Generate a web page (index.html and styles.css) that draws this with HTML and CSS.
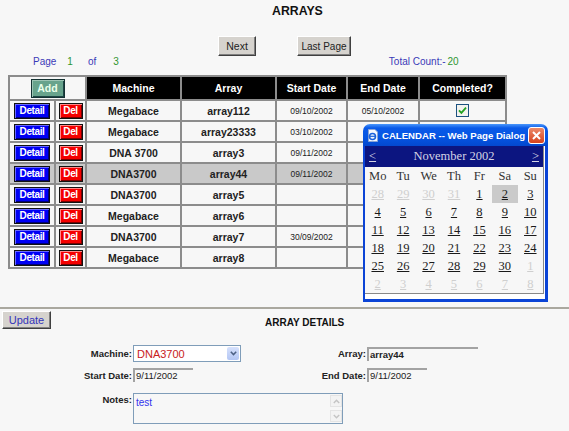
FILE: index.html
```html
<!DOCTYPE html>
<html lang="en">
<head>
    <meta charset="UTF-8">
    <meta name="viewport" content="width=device-width, initial-scale=1.0">
    <title>Arrays</title>
    <link rel="stylesheet" href="styles.css">
</head>
<body>
    <h2 class="title">ARRAYS</h2>

    <div class="nav">
        <button class="btn btn-next">Next</button>
        <button class="btn btn-last">Last Page</button>
    </div>

    <div class="counts">
        <span class="lbl-blue">Page</span>
        <span class="num n-page">1</span>
        <span class="lbl-blue n-of">of</span>
        <span class="num n-pages">3</span>
        <span class="lbl-blue n-total">Total Count:-</span>
        <span class="num n-count">20</span>
    </div>

    <table class="grid">
        <colgroup>
            <col class="c-det"><col class="c-del"><col class="c-mach"><col class="c-arr">
            <col class="c-start"><col class="c-end"><col class="c-done">
        </colgroup>
        <tr class="head">
            <th colspan="2" class="add-cell"><button class="add">Add</button></th>
            <th>Machine</th>
            <th>Array</th>
            <th>Start Date</th>
            <th>End Date</th>
            <th>Completed?</th>
        </tr>
        <tr>
            <td><button class="detail">Detail</button></td>
            <td><button class="del">Del</button></td>
            <td>Megabace</td>
            <td>array112</td>
            <td class="date">09/10/2002</td>
            <td class="date">05/10/2002</td>
            <td>
                <svg class="check" width="13" height="13" viewBox="0 0 13 13">
                    <rect x="0.5" y="0.5" width="12" height="12" fill="#f2f2ee" stroke="#1c5180"/>
                    <path d="M3 6.3 L5.4 8.8 L10 3.6" fill="none" stroke="#21a121" stroke-width="1.8"/>
                </svg>
            </td>
        </tr>
        <tr>
            <td><button class="detail">Detail</button></td>
            <td><button class="del">Del</button></td>
            <td>Megabace</td>
            <td>array23333</td>
            <td class="date">03/10/2002</td>
            <td class="date under">10/10/2002</td>
            <td></td>
        </tr>
        <tr>
            <td><button class="detail">Detail</button></td>
            <td><button class="del">Del</button></td>
            <td>DNA 3700</td>
            <td>array3</td>
            <td class="date">09/11/2002</td>
            <td class="date"></td>
            <td></td>
        </tr>
        <tr class="picked">
            <td><button class="detail">Detail</button></td>
            <td><button class="del">Del</button></td>
            <td>DNA3700</td>
            <td>array44</td>
            <td class="date">09/11/2002</td>
            <td class="date"></td>
            <td></td>
        </tr>
        <tr>
            <td><button class="detail">Detail</button></td>
            <td><button class="del">Del</button></td>
            <td>DNA3700</td>
            <td>array5</td>
            <td class="date"></td>
            <td class="date"></td>
            <td></td>
        </tr>
        <tr>
            <td><button class="detail">Detail</button></td>
            <td><button class="del">Del</button></td>
            <td>Megabace</td>
            <td>array6</td>
            <td class="date"></td>
            <td class="date"></td>
            <td></td>
        </tr>
        <tr>
            <td><button class="detail">Detail</button></td>
            <td><button class="del">Del</button></td>
            <td>DNA3700</td>
            <td>array7</td>
            <td class="date">30/09/2002</td>
            <td class="date"></td>
            <td></td>
        </tr>
        <tr>
            <td><button class="detail">Detail</button></td>
            <td><button class="del">Del</button></td>
            <td>Megabace</td>
            <td>array8</td>
            <td class="date"></td>
            <td class="date"></td>
            <td></td>
        </tr>
    </table>

    <div class="sep"></div>

    <div class="details-head">
        <button class="btn btn-update">Update</button>
        <span class="details-title">ARRAY DETAILS</span>
    </div>

    <div class="form">
        <div class="frow">
            <label class="flbl">Machine:</label>
            <div class="select fld">
                <span class="select-val">DNA3700</span>
                <span class="select-btn">
                    <svg width="7" height="5" viewBox="0 0 7 5"><path d="M0.8 0.8 L3.5 3.6 L6.2 0.8" fill="none" stroke="#4d6185" stroke-width="1.5"/></svg>
                </span>
            </div>
            <label class="flbl">Array:</label>
            <div class="inp fld w111 inp-bold">array44</div>
        </div>
        <div class="frow frow-2">
            <label class="flbl">Start Date:</label>
            <div class="inp fld w60">9/11/2002</div>
            <label class="flbl">End Date:</label>
            <div class="inp fld w60">9/11/2002</div>
        </div>
        <div class="frow frow-3">
            <label class="flbl flbl-top">Notes:</label>
            <div class="notes fld">
                <span class="notes-text">test</span>
                <div class="sb">
                    <span class="sb-btn">
                        <svg width="7" height="5" viewBox="0 0 7 5"><path d="M0.8 4 L3.5 1.2 L6.2 4" fill="none" stroke="#c4c4c4" stroke-width="1.4"/></svg>
                    </span>
                    <span class="sb-btn">
                        <svg width="7" height="5" viewBox="0 0 7 5"><path d="M0.8 1 L3.5 3.8 L6.2 1" fill="none" stroke="#c4c4c4" stroke-width="1.4"/></svg>
                    </span>
                </div>
            </div>
        </div>
    </div>

    <!-- calendar popup floats over the table -->
    <div class="dialog">
        <div class="dlg-title">
            <svg class="dlg-icon" width="12" height="13" viewBox="0 0 12 13">
                <path d="M1.5 0.5 H8 L10.5 3 V12.5 H1.5 Z" fill="#f4f8ff" stroke="#8aa4d4"/>
                <circle cx="5.5" cy="7.5" r="3" fill="none" stroke="#1a62dc" stroke-width="1.6"/>
                <path d="M2.6 7.3 H8.4" stroke="#1a62dc" stroke-width="1.2"/>
            </svg>
            <span class="dlg-text">CALENDAR -- Web Page Dialog</span>
            <span class="dlg-close">
                <svg width="9" height="9" viewBox="0 0 9 9"><path d="M1 1 L8 8 M8 1 L1 8" stroke="#fff" stroke-width="2"/></svg>
            </span>
        </div>
        <div class="dlg-body">
            <div class="cal">
                <div class="cal-head">
                    <a class="cal-arrow">&lt;</a>
                    <span class="cal-month">November 2002</span>
                    <a class="cal-arrow">&gt;</a>
                </div>
                <div class="cal-grid">
                    <span>Mo</span><span>Tu</span><span>We</span><span>Th</span><span>Fr</span><span>Sa</span><span>Su</span>
                    <a class="off">28</a><a class="off">29</a><a class="off">30</a><a class="off">31</a><a>1</a><a class="sel">2</a><a>3</a>
                    <a>4</a><a>5</a><a>6</a><a>7</a><a>8</a><a>9</a><a>10</a>
                    <a>11</a><a>12</a><a>13</a><a>14</a><a>15</a><a>16</a><a>17</a>
                    <a>18</a><a>19</a><a>20</a><a>21</a><a>22</a><a>23</a><a>24</a>
                    <a>25</a><a>26</a><a>27</a><a>28</a><a>29</a><a>30</a><a class="off">1</a>
                    <a class="off">2</a><a class="off">3</a><a class="off">4</a><a class="off">5</a><a class="off">6</a><a class="off">7</a><a class="off">8</a>
                </div>
            </div>
        </div>
    </div>
</body>
</html>
```

FILE: styles.css
```css
body {
    margin: 0;
    background-color: #f7f7f7;
    font-family: "Liberation Sans", Arial, sans-serif;
    color: #111;
    position: relative;
    height: 431px;
    overflow: hidden;
}
.title {
    margin: 0;
    padding: 4px 0 0 272px;
    font-size: 12.3px;
    line-height: 14px;
    font-weight: bold;
}
.nav {
    display: flex;
    gap: 41px;
    padding-left: 218px;
    margin-top: 18px;
}
.btn {
    box-sizing: border-box;
    height: 20px;
    padding: 0;
    background-color: #d6d3ce;
    border: 1px solid;
    border-color: #fff #404040 #404040 #fff;
    box-shadow: inset -1px -1px #808080;
    font-family: inherit;
    font-size: 10px;
    color: #222;
}
.btn-next {
    width: 38px;
    font-size: 10.5px;
}
.btn-last {
    width: 54px;
}
.counts {
    display: flex;
    padding-left: 33px;
    margin-top: 1px;
    height: 10px;
    font-size: 10px;
    line-height: 10px;
}
.lbl-blue {
    color: #3a3ab8;
}
.num {
    color: #2f962f;
}
.n-page { margin-left: 11px; }
.n-of { margin-left: 15px; }
.n-pages { margin-left: 17px; }
.n-total { margin-left: 270px; }
.n-count { margin-left: 2px; }

/* table */
.grid {
    border-collapse: collapse;
    table-layout: fixed;
    width: 497px;
    margin: 8px 0 0 8px;
}
.c-det { width: 46px; }
.c-del { width: 31px; }
.c-mach { width: 95px; }
.c-arr { width: 95px; }
.c-start { width: 71px; }
.c-end { width: 72px; }
.c-done { width: 87px; }
.grid th, .grid td {
    border: 2px solid #8c8c8c;
    padding: 0;
    text-align: center;
    font-size: 10.5px;
    font-weight: bold;
    color: #222;
    height: 19px;
    background-color: #f7f7f7;
}
.grid th {
    height: 22px;
    background-color: #000;
    color: #fff;
}
.grid th.add-cell {
    background-color: #f7f7f7;
}
.grid td.date {
    font-size: 8.5px;
    font-weight: normal;
}
/* this cell sits under the calendar popup */
.grid td.under {
    text-align: left;
    padding-left: 15px;
    white-space: nowrap;
    overflow: hidden;
}
.grid tr.picked td {
    background-color: #c9c9c9;
}
.check {
    display: block;
    margin: 0 auto;
}
.add {
    width: 34px;
    height: 19px;
    padding: 0;
    border: 1px solid #143232;
    box-shadow: inset 1px 1px #9cc4b4, inset -1px -1px #1f4646;
    background-color: #3d7d74;
    background-image: radial-gradient(#7fb89a 0.6px, transparent 0.9px);
    background-size: 2px 2px;
    color: #eaffea;
    font-family: inherit;
    font-size: 10.5px;
    font-weight: bold;
    display: block;
    margin: 0 auto;
}
.detail, .del {
    height: 16px;
    padding: 0;
    display: block;
    margin: 0 auto;
    border: 1px solid #111;
    color: #fff;
    font-family: inherit;
    font-size: 10px;
    font-weight: bold;
    letter-spacing: -0.4px;
}
.detail {
    width: 36px;
    background-color: #0000f4;
    box-shadow: inset 1px 1px #6a6aff, inset -1px -1px #00007a;
}
.del {
    width: 24px;
    background-color: #f40000;
    box-shadow: inset 1px 1px #ff8a8a, inset -1px -1px #7a0000;
}

/* details form */
.sep {
    margin-top: 38px;
    border-top: 2px solid #aaa89f;
}
.details-head {
    display: flex;
    align-items: flex-start;
    height: 18px;
    margin-top: 2px;
    padding-left: 2px;
}
.btn-update {
    width: 49px;
    height: 18px;
    font-size: 11px;
    color: #3333bb;
}
.details-title {
    margin-left: 214px;
    margin-top: 7px;
    font-size: 10px;
    line-height: 10px;
    font-weight: bold;
}
.form {
    margin-top: 16px;
}
.frow {
    display: grid;
    grid-template-columns: 132px 168px 66px 1fr;
    align-items: center;
}
.frow-2 {
    margin-top: 6px;
}
.frow-3 {
    margin-top: 11px;
}
.flbl {
    text-align: right;
    font-size: 9.5px;
    font-weight: bold;
    color: #222;
}
.flbl-top {
    align-self: start;
    margin-top: 1px;
}
.fld {
    margin-left: 1px;
}
.select {
    width: 108px;
    height: 17px;
    box-sizing: border-box;
    border: 1px solid #7f9db9;
    background-color: #fff;
    display: flex;
    align-items: center;
    justify-content: space-between;
}
.select-val {
    margin-left: 3px;
    color: #c8201c;
    font-size: 11px;
}
.select-btn {
    width: 12px;
    height: 13px;
    margin-right: 1px;
    border-radius: 2px;
    background: linear-gradient(#d6e1fc, #b3c6f4);
    display: flex;
    align-items: center;
    justify-content: center;
}
.inp {
    box-sizing: border-box;
    height: 14px;
    border-top: 2px solid #a3a3a3;
    border-left: 2px solid #a3a3a3;
    padding-left: 1px;
    font-size: 9.5px;
    line-height: 12px;
    color: #222;
}
.w60 { width: 60px; }
.w111 { width: 111px; }
.inp-bold { font-weight: bold; }
.notes {
    grid-column: 2 / 4;
    width: 210px;
    height: 31px;
    box-sizing: border-box;
    border: 1px solid #7f9db9;
    display: flex;
}
.notes-text {
    flex: 1;
    padding: 3px 2px;
    font-size: 10px;
    color: #3333ee;
}
.sb {
    width: 12px;
    display: flex;
    flex-direction: column;
    justify-content: space-between;
    padding: 1px 0;
}
.sb-btn {
    height: 12px;
    box-sizing: border-box;
    border: 1px solid #e4e4e4;
    background-color: #f3f3f3;
    display: flex;
    align-items: center;
    justify-content: center;
}

/* calendar dialog */
.dialog {
    position: absolute;
    left: 363px;
    top: 124px;
    width: 185px;
}
.dlg-title {
    height: 22px;
    border-radius: 7px 7px 0 0;
    background: linear-gradient(#4a97fb, #0a5ae8 4px, #0556e4 55%, #0348cf);
    display: flex;
    align-items: center;
    padding: 0 3px 0 4px;
}
.dlg-text {
    margin-left: 3px;
    color: #fff;
    font-size: 9.6px;
    font-weight: bold;
    white-space: nowrap;
}
.dlg-close {
    margin-left: auto;
    width: 15px;
    height: 15px;
    border: 1px solid #fff;
    border-radius: 3px;
    background: linear-gradient(#ec8a6a, #d6421c);
    display: flex;
    align-items: center;
    justify-content: center;
}
.dlg-body {
    height: 156px;
    box-sizing: border-box;
    border: solid #0b44d6;
    border-width: 0 3px 3px 2px;
    background-color: #fff;
}
.cal {
    width: 179px;
    box-sizing: border-box;
    border-right: 1px solid #888;
    border-bottom: 1px solid #888;
    background-color: #f7f7f7;
    font-family: "Liberation Serif", "Times New Roman", serif;
    font-size: 12.5px;
}
.cal-head {
    height: 21px;
    background-color: #0c1580;
    display: flex;
    align-items: center;
    color: #d4d4e4;
}
.cal-arrow {
    margin: 0 4px;
    text-decoration: underline;
}
.cal-month {
    flex: 1;
    text-align: center;
}
.cal-grid {
    display: grid;
    grid-template-columns: repeat(7, 1fr);
    grid-auto-rows: 18px;
    line-height: 18px;
    text-align: center;
    color: #333;
}
.cal-grid a {
    color: #1a1a1a;
    text-decoration: underline;
}
.cal-grid a.off {
    color: #cfcfcf;
}
.cal-grid a.sel {
    background-color: #cacaca;
}
```
